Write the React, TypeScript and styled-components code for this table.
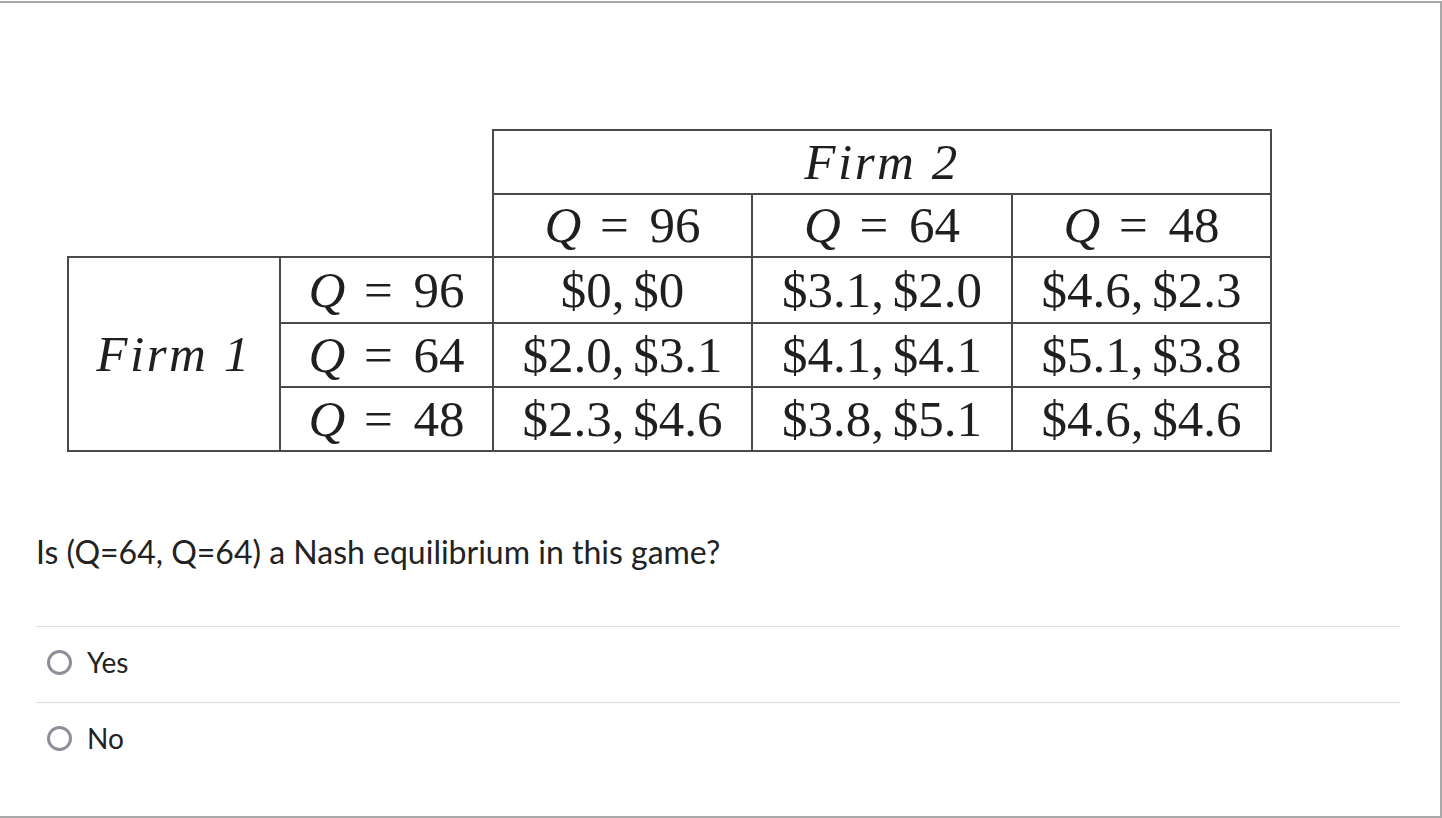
import React from 'react'
import styled, { createGlobalStyle } from 'styled-components'

const GlobalStyle = createGlobalStyle`
  html, body {
    margin: 0;
    padding: 0;
    background: #fff;
  }
  body {
    font-family: Lato, "Open Sans", sans-serif;
  }
`

const payoffs = [
    { label: '96', cells: ['$0, $0', '$3.1, $2.0', '$4.6, $2.3'] },
    { label: '64', cells: ['$2.0, $3.1', '$4.1, $4.1', '$5.1, $3.8'] },
    { label: '48', cells: ['$2.3, $4.6', '$3.8, $5.1', '$4.6, $4.6'] },
]

const columns = ['96', '64', '48']

const answers = ['Yes', 'No']

const QVal = ({ value }: { value: string }) => (
    <>
        <MathItalic>Q</MathItalic>
        <Equals>=</Equals>
        {value}
    </>
)

const Money = ({ text }: { text: string }) => {
    const [a, b] = text.split(', ')
    return (
        <>
            {a},<ThinSpace />{b}
        </>
    )
}

const App = () => {
    return (
        <>
            <GlobalStyle />
            <Page>
                <Card>
                    <GameTable>
                        <colgroup>
                            <col style={{ width: 212 }} />
                            <col style={{ width: 213 }} />
                            <col style={{ width: 259 }} />
                            <col style={{ width: 260 }} />
                            <col style={{ width: 259 }} />
                        </colgroup>
                        <tbody>
                            <Row $h={64}>
                                <Blank colSpan={2} rowSpan={2} />
                                <Cell colSpan={3}>
                                    <FirmName>Firm 2</FirmName>
                                </Cell>
                            </Row>
                            <Row $h={63}>
                                {columns.map(c => (
                                    <Cell key={c}>
                                        <QVal value={c} />
                                    </Cell>
                                ))}
                            </Row>
                            {payoffs.map((row, i) => (
                                <Row $h={i === 0 ? 66 : 64} key={row.label}>
                                    {i === 0 && (
                                        <Cell rowSpan={3}>
                                            <FirmName>Firm 1</FirmName>
                                        </Cell>
                                    )}
                                    <Cell>
                                        <QVal value={row.label} />
                                    </Cell>
                                    {row.cells.map(c => (
                                        <Cell key={c}>
                                            <Money text={c} />
                                        </Cell>
                                    ))}
                                </Row>
                            ))}
                        </tbody>
                    </GameTable>

                    <Question>Is (Q=64, Q=64) a Nash equilibrium in this game?</Question>

                    <AnswerList>
                        {answers.map(a => (
                            <Answer key={a}>
                                <Radio />
                                <AnswerText>{a}</AnswerText>
                            </Answer>
                        ))}
                    </AnswerList>
                </Card>
            </Page>
        </>
    )
}

const Page = styled.div`
    padding-top: 1px;
    width: 1442px;
    height: 818px;
    box-sizing: border-box;
`

const Card = styled.div`
    box-sizing: border-box;
    height: 817px;
    border-top: 2px solid #a8a8a8;
    border-right: 2px solid #a8a8a8;
    border-bottom: 2px solid #a8a8a8;
    padding: 126px 40px 0 36px;
`

const GameTable = styled.table`
    margin-left: 31px;
    border-collapse: collapse;
    table-layout: fixed;
    width: 1203px;
    font-family: "Liberation Serif", "Times New Roman", serif;
    font-size: 51px;
    color: #1f1f1f;
`

const Row = styled.tr<{ $h: number }>`
    height: ${p => p.$h}px;
`

const Cell = styled.td`
    border: 2px solid #4a4a4a;
    padding: 0;
    text-align: center;
    vertical-align: middle;
    white-space: nowrap;
    line-height: 1;
`

const Blank = styled.td`
    border: none;
    padding: 0;
`

const FirmName = styled.span`
    font-style: italic;
    letter-spacing: 0.05em;
`

const MathItalic = styled.span`
    font-style: italic;
`

const Equals = styled.span`
    display: inline-block;
    width: 0.78em;
    margin: 0 0.3em 0 0.26em;
    text-align: center;
`

const ThinSpace = styled.span`
    display: inline-block;
    width: 0.17em;
`

const Question = styled.p`
    margin: 79px 0 0;
    font-size: 32px;
    line-height: 1.3;
    color: #222;
`

const AnswerList = styled.div`
    margin-top: 53px;
`

const Answer = styled.label`
    display: flex;
    align-items: center;
    gap: 15px;
    height: 76px;
    padding: 0 0 4px 11px;
    border-top: 1.5px solid #dcdcdc;
    box-sizing: border-box;
    cursor: pointer;
`

const Radio = styled.span`
    width: 19px;
    height: 19px;
    border: 3px solid #8e8e9b;
    border-radius: 50%;
    flex-shrink: 0;
`

const AnswerText = styled.span`
    font-size: 28px;
    color: #222;
`

export default App
